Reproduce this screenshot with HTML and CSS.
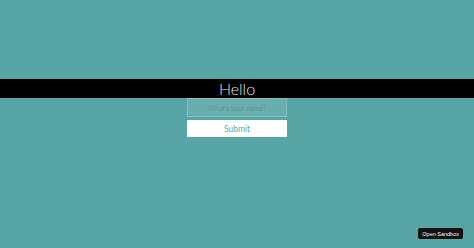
FILE: index.html
```html
<!DOCTYPE html>
<html>
<head>
<meta charset="utf-8">
<link rel="stylesheet" href="styles.css">
</head>
<body>
<div class="page">
  <h1 class="title">Hello</h1>
  <form class="form">
    <input class="name-input" type="text" placeholder="What's your name?">
    <button class="submit" type="button">Submit</button>
  </form>
</div>
<button class="sandbox" type="button">Open Sandbox</button>
</body>
</html>
```
FILE: styles.css
```css
html, body {
  margin: 0;
  padding: 0;
  height: 100%;
}
body {
  background: #58a5a5;
  font-family: "Lato", "Open Sans", sans-serif;
  overflow: hidden;
}
.page {
  display: flex;
  flex-direction: column;
  align-items: center;
  padding-top: 79px;
}
.title {
  margin: 0;
  width: 100%;
  background: #000;
  color: #e2e2e2;
  text-align: center;
  font-weight: 300;
  font-size: 16px;
  line-height: 19px;
  height: 19px;
}
.form {
  display: flex;
  flex-direction: column;
  gap: 3px;
  width: 100px;
}
.name-input {
  box-sizing: border-box;
  width: 100px;
  height: 19px;
  margin: 0;
  padding: 0 4px;
  border: 1px solid rgba(255,255,255,0.22);
  background: rgba(255,255,255,0.1);
  color: #fff;
  font-family: "Lato", sans-serif;
  font-size: 7px;
  font-weight: 400;
  text-align: center;
  outline: none;
}
.name-input::placeholder {
  color: #6a9494;
  opacity: 1;
}
.submit {
  box-sizing: border-box;
  width: 100px;
  height: 17px;
  margin: 0;
  padding: 0;
  border: none;
  background: #fff;
  color: #5fa8a8;
  font-family: "Lato", sans-serif;
  font-size: 8.5px;
  font-weight: 400;
}
.sandbox {
  position: fixed;
  right: 11px;
  bottom: 9px;
  margin: 0;
  padding: 0 4px;
  height: 11px;
  border: none;
  border-radius: 2px;
  background: #111;
  color: #fff;
  font-family: "Liberation Sans", Arial, sans-serif;
  font-size: 5.5px;
}
```
